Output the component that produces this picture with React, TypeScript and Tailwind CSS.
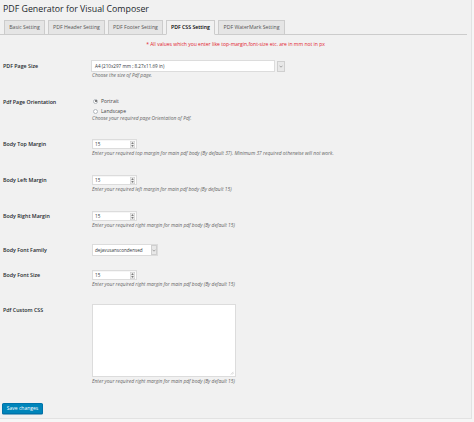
import React from "react";

const font = { fontFamily: '"Open Sans", "Noto Sans", Arial, sans-serif' };

function Spinner() {
  return (
    <svg width="5" height="7" viewBox="0 0 5 7" className="shrink-0">
      <rect x="0.25" y="0.25" width="4.5" height="6.5" fill="#ececec" stroke="#c8c8c8" strokeWidth="0.5" />
      <path d="M1.2 2.8 L2.5 1.3 L3.8 2.8 Z" fill="#555" />
      <path d="M1.2 4.2 L2.5 5.7 L3.8 4.2 Z" fill="#555" />
    </svg>
  );
}

function Chevron() {
  return (
    <svg width="4" height="3" viewBox="0 0 4 3">
      <path d="M0.5 0.7 L2 2.2 L3.5 0.7" fill="none" stroke="#777" strokeWidth="0.6" />
    </svg>
  );
}

function NumberInput({ value }: { value: string }) {
  return (
    <div className="w-[45px] h-[10px] bg-white border border-[#dcdcdc] shadow-[inset_0_0.5px_1px_rgba(0,0,0,0.07)] flex items-center pl-[2px] pr-[1px]">
      <span className="flex-1 text-[4.6px] leading-[8px] text-[#32373c]">{value}</span>
      <Spinner />
    </div>
  );
}

function Desc({ children, className = "" }: { children: React.ReactNode; className?: string }) {
  return (
    <div className={"text-[4.9px] leading-[7px] italic text-[#666] whitespace-nowrap " + className}>{children}</div>
  );
}

function Label({ children, className = "" }: { children: React.ReactNode; className?: string }) {
  return (
    <div className={"w-[92px] shrink-0 pl-[3px] text-[5.3px] leading-[8px] font-semibold text-[#23282d] " + className}>
      {children}
    </div>
  );
}

function Radio({ checked, label }: { checked?: boolean; label: string }) {
  return (
    <div className="h-[10px] flex items-center gap-[3px] pl-[1px]">
      <span className="w-[5px] h-[5px] rounded-full bg-white border border-[#b4b9be] flex items-center justify-center shrink-0">
        {checked && <span className="w-[2px] h-[2px] rounded-full bg-[#555]" />}
      </span>
      <span className="text-[5px] leading-[8px] text-[#444]">{label}</span>
    </div>
  );
}

const tabs = [
  { name: "Basic Setting", w: "w-[41px]" },
  { name: "PDF Header Setting", w: "w-[57px]" },
  { name: "PDF Footer Setting", w: "w-[55px]" },
  { name: "PDF CSS Setting", w: "w-[49px]", active: true },
  { name: "PDF WaterMark Setting", w: "w-[67px]" },
];

export default function App() {
  return (
    <div className="w-[474px] h-[422px] bg-[#f6f6f6] overflow-hidden" style={font}>
      <div className="w-[472px] h-[419px] bg-[#f1f1f1] border-r border-b border-[#e2e2e2] flex flex-col">
        <h1 className="pl-[3px] pt-[3px] text-[8.8px] leading-[12px] text-[#23282d]">
          PDF Generator for Visual Composer
        </h1>
        <div className="mt-[4px] h-[16px] flex items-end gap-[3px] pl-[4px] border-b border-[#cccccc] mr-[4px]">
          {tabs.map((t) => (
            <div
              key={t.name}
              className={
                t.w +
                " h-[15px] -mb-px border border-[#cccccc] flex items-center justify-center whitespace-nowrap text-[5.2px] " +
                (t.active
                  ? "bg-[#f1f1f1] border-b-[#f1f1f1] text-[#000] font-semibold"
                  : "bg-[#e5e5e5] text-[#555]")
              }
            >
              {t.name}
            </div>
          ))}
        </div>

        <div className="mt-[5px] h-[8px] text-center text-[5px] leading-[8px] text-[#e2232e]">
          * All values which you enter like top-margin,font-size etc. are in mm not in px
        </div>

        {/* PDF Page Size */}
        <div className="mt-[12px] flex">
          <Label className="pt-[2px]">PDF Page Size</Label>
          <div className="-ml-[1px]">
            <div className="w-[194px] h-[12px] flex items-center">
              <div className="flex-1 h-[12px] bg-white border border-[#dcdcdc] flex items-center pl-[3px] text-[4.6px] text-[#32373c]">
                A4 (210x297 mm ; 8.27x11.69 in)
              </div>
              <div className="ml-[2px] w-[8px] h-[11px] bg-[#e8e8e8] border border-[#cfcfcf] flex items-center justify-center">
                <Chevron />
              </div>
            </div>
            <Desc className="pl-[1px]">Choose the size of Pdf page.</Desc>
          </div>
        </div>

        {/* Orientation */}
        <div className="mt-[17px] flex">
          <Label className="pt-[2px]">Pdf Page Orientation</Label>
          <div>
            <Radio checked label="Portrait" />
            <Radio label="Landscape" />
            <Desc className="-mt-[1px]">Choose your required page Orientation of Pdf.</Desc>
          </div>
        </div>

        {/* Body Top Margin */}
        <div className="mt-[17px] flex">
          <Label className="pt-[1px]">Body Top Margin</Label>
          <div>
            <NumberInput value="15" />
            <Desc className="mt-[1px]">
              Enter your required top margin for main pdf body (By default 37). Minimum 37 required otherwise will not work.
            </Desc>
          </div>
        </div>

        {/* Body Left Margin */}
        <div className="mt-[18px] flex">
          <Label className="pt-[1px]">Body Left Margin</Label>
          <div>
            <NumberInput value="15" />
            <Desc className="mt-[1px]">Enter your required left margin for main pdf body (By default 15)</Desc>
          </div>
        </div>

        {/* Body Right Margin */}
        <div className="mt-[18px] flex">
          <Label className="pt-[1px]">Body Right Margin</Label>
          <div>
            <NumberInput value="15" />
            <Desc className="mt-[1px]">Enter your required right margin for main pdf body (By default 15)</Desc>
          </div>
        </div>

        {/* Body Font Family */}
        <div className="mt-[15px] flex">
          <Label className="pt-[2px]">Body Font Family</Label>
          <div className="w-[66px] h-[12px] bg-white border border-[#dcdcdc] flex items-center">
            <span className="flex-1 pl-[2px] text-[4.6px] text-[#32373c]">dejavusanscondensed</span>
            <div className="w-[6px] h-[10px] mr-[0.5px] bg-[#e8e8e8] border border-[#cfcfcf] flex items-center justify-center">
              <Chevron />
            </div>
          </div>
        </div>

        {/* Body Font Size */}
        <div className="mt-[14px] flex">
          <Label className="pt-[1px]">Body Font Size</Label>
          <div>
            <NumberInput value="15" />
            <Desc className="mt-[1px]">Enter your required right margin for main pdf body (By default 15)</Desc>
          </div>
        </div>

        {/* Pdf Custom CSS */}
        <div className="mt-[16px] flex">
          <Label className="pt-[2px]">Pdf Custom CSS</Label>
          <div>
            <div className="relative w-[144px] h-[73px] bg-white border border-[#dcdcdc]">
              <svg width="4" height="4" viewBox="0 0 4 4" className="absolute right-[1px] bottom-[1px]">
                <path d="M3.5 0.8 L0.8 3.5 M3.5 2.2 L2.2 3.5" stroke="#999" strokeWidth="0.4" />
              </svg>
            </div>
            <Desc className="mt-[1px]">Enter your required right margin for main pdf body (By default 15)</Desc>
          </div>
        </div>

        <div className="mt-[18px] pl-[2px] flex">
          <button className="w-[41px] h-[11px] bg-[#0085ba] border border-[#0073aa] rounded-[1.5px] text-white text-[5px] leading-[9px] shadow-[0_0.5px_0_#006799] flex items-center justify-center">
            Save changes
          </button>
        </div>
      </div>
    </div>
  );
}
